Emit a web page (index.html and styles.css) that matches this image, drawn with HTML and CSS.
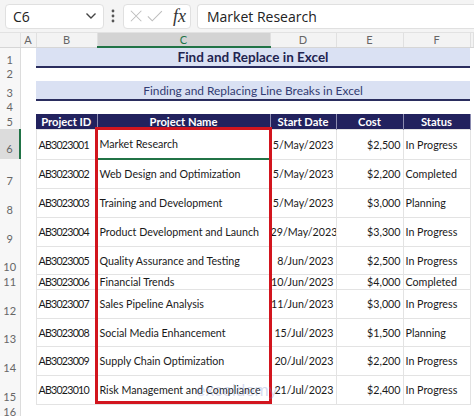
FILE: index.html
```html
<!DOCTYPE html>
<html>
<head>
	<meta charset="utf-8">
	<title>Find and Replace in Excel</title>
	<link rel="stylesheet" href="styles.css">
</head>
<body>
	<div class="formula-bar">
		<div class="name-box">
			<span>C6</span>
			<svg class="chev" width="12" height="8" viewBox="0 0 12 8"><path d="M1.5 1.5 L6 6 L10.5 1.5" fill="none" stroke="#444" stroke-width="1.4"/></svg>
		</div>
		<svg class="dots" width="4" height="14" viewBox="0 0 4 14"><circle cx="2" cy="2" r="1.4" fill="#555"/><circle cx="2" cy="7" r="1.4" fill="#555"/><circle cx="2" cy="12" r="1.4" fill="#555"/></svg>
		<div class="fx-box">
			<svg width="14" height="14" viewBox="0 0 14 14"><path d="M1 1 L13 13 M13 1 L1 13" stroke="#bdbdbd" stroke-width="1.2"/></svg>
			<svg width="18" height="14" viewBox="0 0 18 14"><path d="M1 7.5 L6 12.5 L17 1.5" fill="none" stroke="#bdbdbd" stroke-width="1.2"/></svg>
			<span class="fx">fx</span>
		</div>
		<div class="formula">Market Research</div>
	</div>

	<div class="sheet">
		<table class="grid">
			<colgroup>
				<col class="c-row"><col class="c-a"><col class="c-b"><col class="c-c"><col class="c-d"><col class="c-e"><col class="c-f"><col>
			</colgroup>
			<tr class="heads">
				<th class="corner"></th><th>A</th><th>B</th><th class="sel">C</th><th>D</th><th>E</th><th>F</th><th></th>
			</tr>
			<tr class="r1">
				<td class="rn">1</td><td></td><td colspan="5" class="title">Find and Replace in Excel</td><td></td>
			</tr>
			<tr class="r2">
				<td class="rn">2</td><td colspan="7"></td>
			</tr>
			<tr class="r3">
				<td class="rn">3</td><td></td><td colspan="5" class="subtitle">Finding and Replacing Line Breaks in Excel</td><td></td>
			</tr>
			<tr class="r4">
				<td class="rn">4</td><td colspan="7"></td>
			</tr>
			<tr class="r5">
				<td class="rn">5</td><td></td>
				<td class="th">Project ID</td><td class="th">Project Name</td><td class="th">Start Date</td><td class="th">Cost</td><td class="th">Status</td><td></td>
			</tr>
			<tr class="first">
				<td class="rn on">6</td><td></td>
				<td class="d id">AB3023001</td><td class="d active">Market Research</td><td class="d num">5/May/2023</td><td class="d num">$2,500</td><td class="d">In Progress</td><td></td>
			</tr>
			<tr class="tall">
				<td class="rn">7</td><td></td>
				<td class="d id">AB3023002</td><td class="d">Web Design and Optimization</td><td class="d num">5/May/2023</td><td class="d num">$2,200</td><td class="d">Completed</td><td></td>
			</tr>
			<tr class="tall">
				<td class="rn">8</td><td></td>
				<td class="d id">AB3023003</td><td class="d">Training and Development</td><td class="d num">5/May/2023</td><td class="d num">$3,000</td><td class="d">Planning</td><td></td>
			</tr>
			<tr class="tall">
				<td class="rn">9</td><td></td>
				<td class="d id">AB3023004</td><td class="d">Product Development and Launch</td><td class="d num">29/May/2023</td><td class="d num">$3,300</td><td class="d">In Progress</td><td></td>
			</tr>
			<tr class="mid">
				<td class="rn">10</td><td></td>
				<td class="d id">AB3023005</td><td class="d">Quality Assurance and Testing</td><td class="d num">8/Jun/2023</td><td class="d num">$2,500</td><td class="d">In Progress</td><td></td>
			</tr>
			<tr class="short">
				<td class="rn">11</td><td></td>
				<td class="d id">AB3023006</td><td class="d">Financial Trends</td><td class="d num">10/Jun/2023</td><td class="d num">$4,000</td><td class="d">Completed</td><td></td>
			</tr>
			<tr class="tall">
				<td class="rn">12</td><td></td>
				<td class="d id">AB3023007</td><td class="d">Sales Pipeline Analysis</td><td class="d num">11/Jun/2023</td><td class="d num">$3,000</td><td class="d">In Progress</td><td></td>
			</tr>
			<tr class="mid">
				<td class="rn">13</td><td></td>
				<td class="d id">AB3023008</td><td class="d">Social Media Enhancement</td><td class="d num">15/Jul/2023</td><td class="d num">$1,500</td><td class="d">Planning</td><td></td>
			</tr>
			<tr class="tall">
				<td class="rn">14</td><td></td>
				<td class="d id">AB3023009</td><td class="d">Supply Chain Optimization</td><td class="d num">20/Jul/2023</td><td class="d num">$2,200</td><td class="d">In Progress</td><td></td>
			</tr>
			<tr class="tall">
				<td class="rn">15</td><td></td>
				<td class="d id">AB3023010</td><td class="d">Risk Management and Compliance</td><td class="d num">21/Jul/2023</td><td class="d num">$2,400</td><td class="d">In Progress</td><td></td>
			</tr>
			<tr class="last">
				<td class="rn">16</td><td colspan="7"></td>
			</tr>
		</table>

		<div class="callout"></div>
		<div class="watermark">exceldemy</div>
	</div>
</body>
</html>
```

FILE: styles.css
```css
body{
	margin:0;
	width:474px;
	height:416px;
	overflow:hidden;
	background:#fff;
	font-family:Lato, "Liberation Sans", sans-serif;
}

/* formula bar */
.formula-bar{
	display:flex;
	align-items:center;
	height:33px;
	padding-left:5px;
	box-sizing:border-box;
	background:#f4f4f4;
	border-bottom:1px solid #e2e2e2;
	font-family:"Open Sans", "Noto Sans", sans-serif;
	color:#222;
}
.name-box, .fx-box, .formula{
	height:25px;
	box-sizing:border-box;
	background:#fff;
	border:1px solid #e0e0e0;
	border-radius:4px;
	display:flex;
	align-items:center;
}
.name-box{
	width:99px;
	padding:0 6px 0 7px;
	justify-content:space-between;
	font-size:14px;
}
.dots{
	margin:0 8px 0 7px;
}
.fx-box{
	width:68px;
	padding:0 4px 0 6px;
	gap:5px;
}
.fx{
	font-family:"Liberation Serif", serif;
	font-style:italic;
	font-size:18px;
	color:#333;
	margin-left:5px;
}
.formula{
	flex:1;
	margin-left:6px;
	padding-left:9px;
	font-size:14px;
	border-right:0;
	border-radius:4px 0 0 4px;
}

/* sheet */
.sheet{
	position:relative;
}
.grid{
	border-collapse:collapse;
	table-layout:fixed;
	width:474px;
}
.c-row{width:20px}
.c-a{width:16px}
.c-b{width:61px}
.c-c{width:173px}
.c-d{width:66px}
.c-e{width:67px}
.c-f{width:67px}

td, th{
	padding:0;
	font-size:11px;
	white-space:nowrap;
	overflow:hidden;
}
.heads{height:14px}
.heads th{
	background:#f3f3f3;
	color:#666;
	font-weight:normal;
	font-size:11px;
	border-right:1px solid #e0e0e0;
	border-bottom:1px solid #d6d6d6;
}
.heads th.sel{
	background:#d3d3d3;
	color:#217346;
	border-bottom:2px solid #217346;
}
.corner{
	background:#f3f3f3;
}

.rn{
	background:#f7f7f7;
	color:#666;
	font-size:11px;
	text-align:center;
	vertical-align:bottom;
	padding-bottom:1px;
	border-right:1px solid #dcdcdc;
}
.rn.on{
	background:#dcdcdc;
	border-right:2px solid #217346;
	padding-bottom:4px;
}
.last .rn{
	vertical-align:top;
	padding-top:1px;
}

.r1{height:20px}
.r2{height:13px}
.r3{height:19px}
.r4{height:14px}
.r5{height:15px}
.first{height:30px}
.tall{height:29px}
.mid{height:28px}
.short{height:15px}
.last{height:20px}

.title{
	background:#dae1f3;
	border-bottom:2px solid #2a2d5e;
	text-align:center;
	font-weight:bold;
	font-size:13.5px;
	color:#1f2450;
}
.subtitle{
	background:#dae1f3;
	border-bottom:2px solid #2a2d5e;
	text-align:center;
	font-size:11.9px;
	color:#323c72;
}
.th{
	background:#22225e;
	color:#fff;
	font-weight:bold;
	font-size:11.2px;
	text-align:center;
	border-right:1px solid #8c8cb0;
}
.d{
	padding:0 2px;
	color:#1a1a1a;
	font-size:10.7px;
	border:1px solid #e3e3e3;
}
.id{
	letter-spacing:-0.8px;
}
.num{
	text-align:right;
	padding-left:0;
}
.active{
	border-bottom:2px solid #217346;
}

/* red highlight around the Project Name column */
.callout{
	position:absolute;
	left:95px;
	top:94px;
	width:177px;
	height:277px;
	box-sizing:border-box;
	border:3px solid #d2151e;
}

.watermark{
	position:absolute;
	left:196px;
	top:348px;
	color:rgba(110,130,200,0.3);
	font-family:"Liberation Sans", sans-serif;
	font-size:17px;
}
```
